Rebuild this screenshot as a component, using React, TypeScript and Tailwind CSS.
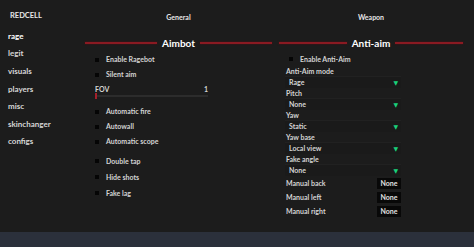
import { ReactNode } from "react";

const font = { fontFamily: "Lato, 'Open Sans', 'DejaVu Sans', sans-serif" };

function Header({ title }: { title: string }) {
	return (
		<div className="flex h-[12px] items-center gap-[4px]">
			<div className="h-[2px] flex-1 bg-[#8a1a22] shadow-[0_0_2px_#5a0f14]" />
			<span className="px-[1px] text-[10px] font-bold leading-none text-white">{title}</span>
			<div className="h-[2px] flex-1 bg-[#8a1a22] shadow-[0_0_2px_#5a0f14]" />
		</div>
	);
}

function Check({ label, h = "h-[15px]" }: { label: string; h?: string }) {
	return (
		<div className={`flex ${h} items-center pl-[10px]`}>
			<span className="h-[4px] w-[4px] bg-[#050505]" />
			<span className="ml-[7px] text-[7px] font-bold leading-none text-[#d4d4d4]">{label}</span>
		</div>
	);
}

function Label({ children }: { children: ReactNode }) {
	return (
		<div className="flex h-[10px] items-center pl-[7px] text-[7px] font-bold leading-none text-[#d4d4d4]">
			{children}
		</div>
	);
}

function Dropdown({ value }: { value: string }) {
	return (
		<div className="ml-[6px] mr-[62px] flex h-[12px] items-center justify-between border-t border-[#212121] bg-[#1a1a1a] pl-[4px] pr-[3px]">
			<span className="text-[7px] font-bold leading-none text-[#d4d4d4]">{value}</span>
			<span className="text-[6px] leading-none text-[#19d27a]">▼</span>
		</div>
	);
}

function Bind({ label }: { label: string }) {
	return (
		<div className="flex h-[14px] items-center justify-between pl-[7px] pr-[62px]">
			<span className="text-[7px] font-bold leading-none text-[#d4d4d4]">{label}</span>
			<span className="flex h-[11px] w-[24px] items-center justify-center bg-[#080808] text-[7px] font-bold leading-none text-[#e0e0e0]">
				None
			</span>
		</div>
	);
}

const nav = ["rage", "legit", "visuals", "players", "misc", "skinchanger", "configs"];

export default function App() {
	return (
		<div className="flex h-[247px] w-[474px] flex-col bg-[#1c1c1c]" style={font}>
			<div className="flex flex-1">
				{/* sidebar */}
				<div className="w-[80px] pl-[8px] pt-[11px]">
					<div className="pl-[2px] text-[7.5px] font-bold leading-[9px] text-[#e8e8e8]">REDCELL</div>
					<div className="mt-[7px] flex flex-col">
						{nav.map((n, i) => (
							<div
								key={n}
								className={`flex h-[17.6px] items-center text-[8px] font-bold leading-none ${i === 0 ? "text-white" : "text-[#d6d6d6]"}`}
							>
								{n}
							</div>
						))}
					</div>
				</div>

				{/* content */}
				<div className="flex gap-[7px] pl-[5px]">
					<div className="flex w-[187px] flex-col">
						<div className="flex h-[37px] items-start justify-center pt-[13px] text-[7px] font-bold leading-[9px] text-[#e6e6e6]">
							General
						</div>
						<Header title="Aimbot" />
						<div className="mt-[3px]" />
						<Check label="Enable Ragebot" />
						<Check label="Silent aim" />
						<div className="flex h-[13px] items-center justify-between pl-[10px] pr-[64px] pt-[1px] text-[7px] font-bold leading-none text-[#d4d4d4]">
							<span>FOV</span>
							<span>1</span>
						</div>
						<div className="relative ml-[10px] mr-[64px] h-[2px] bg-[#2c2c2c]">
							<span className="absolute -top-[2px] left-0 h-[6px] w-[2px] bg-[#a3202c]" />
						</div>
						<div className="mt-[7px]" />
						<Check label="Automatic fire" />
						<Check label="Autowall" />
						<Check label="Automatic scope" />
						<div className="mt-[4px]" />
						<Check label="Double tap" h="h-[16px]" />
						<Check label="Hide shots" h="h-[16px]" />
						<Check label="Fake lag" h="h-[16px]" />
					</div>

					<div className="flex w-[184px] flex-col">
						<div className="flex h-[37px] items-start justify-center pt-[13px] text-[7px] font-bold leading-[9px] text-[#e6e6e6]">
							Weapon
						</div>
						<Header title="Anti-aim" />
						<div className="mt-[3px]" />
						<Check label="Enable Anti-Aim" h="h-[14px]" />
						<Label>Anti-Aim mode</Label>
						<Dropdown value="Rage" />
						<Label>Pitch</Label>
						<Dropdown value="None" />
						<Label>Yaw</Label>
						<Dropdown value="Static" />
						<Label>Yaw base</Label>
						<Dropdown value="Local view" />
						<Label>Fake angle</Label>
						<Dropdown value="None" />
						<Bind label="Manual back" />
						<Bind label="Manual left" />
						<Bind label="Manual right" />
					</div>
				</div>
			</div>
			<div className="h-[15px] bg-[#2b303b]" />
		</div>
	);
}
